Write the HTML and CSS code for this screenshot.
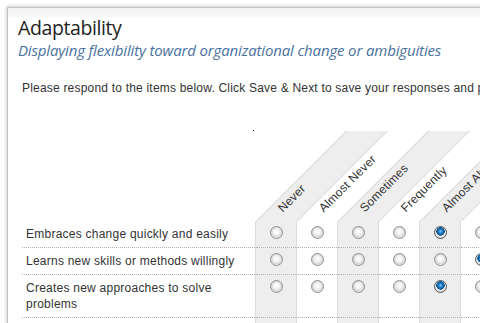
FILE: index.html
```html
<!DOCTYPE html>
<html>
<head>
<meta charset="utf-8">
<link rel="stylesheet" href="styles.css">
</head>
<body>
<div class="card">
  <div class="head">
    <h1 class="title">Adaptability</h1>
    <p class="sub">Displaying flexibility toward organizational change or ambiguities</p>
  </div>
  <div class="content">
    <p class="intro">Please respond to the items below. Click Save &amp; Next to save your responses and proceed to the next page.</p>
    <table class="grid">
      <thead>
        <tr>
          <th class="lblhead"><span class="dot"></span></th>
          <th class="colhead alt"><div class="band"></div><span class="clabel">Never</span></th>
          <th class="colhead"><div class="band"></div><span class="clabel">Almost Never</span></th>
          <th class="colhead alt"><div class="band"></div><span class="clabel">Sometimes</span></th>
          <th class="colhead"><div class="band"></div><span class="clabel">Frequently</span></th>
          <th class="colhead alt"><div class="band"></div><span class="clabel">Almost Always</span></th>
          <th class="colhead"><div class="band"></div><span class="clabel">Always</span></th>
        </tr>
      </thead>
      <tbody>
        <tr>
          <td class="q">Embraces change quickly and easily</td>
          <td class="opt alt"><span class="radio"></span></td>
          <td class="opt"><span class="radio"></span></td>
          <td class="opt alt"><span class="radio"></span></td>
          <td class="opt"><span class="radio"></span></td>
          <td class="opt alt"><span class="radio on"></span></td>
          <td class="opt"><span class="radio"></span></td>
        </tr>
        <tr>
          <td class="q">Learns new skills or methods willingly</td>
          <td class="opt alt"><span class="radio"></span></td>
          <td class="opt"><span class="radio"></span></td>
          <td class="opt alt"><span class="radio"></span></td>
          <td class="opt"><span class="radio"></span></td>
          <td class="opt alt"><span class="radio"></span></td>
          <td class="opt"><span class="radio on"></span></td>
        </tr>
        <tr>
          <td class="q">Creates new approaches to solve problems</td>
          <td class="opt alt"><span class="radio"></span></td>
          <td class="opt"><span class="radio"></span></td>
          <td class="opt alt"><span class="radio"></span></td>
          <td class="opt"><span class="radio"></span></td>
          <td class="opt alt"><span class="radio on"></span></td>
          <td class="opt"><span class="radio"></span></td>
        </tr>
        <tr>
          <td class="q">&nbsp;</td>
          <td class="opt alt"></td>
          <td class="opt"></td>
          <td class="opt alt"></td>
          <td class="opt"></td>
          <td class="opt alt"></td>
          <td class="opt"></td>
        </tr>
      </tbody>
    </table>
  </div>
</div>
</body>
</html>
```
FILE: styles.css
```css
html, body {
  margin: 0;
  padding: 0;
  background: #ffffff;
  overflow: hidden;
}
body {
  width: 480px;
  height: 323px;
}
.card {
  margin: 7px 0 0 7px;
  width: 700px;
  height: 400px;
  background: #ffffff;
  border: 1px solid #c4c4c4;
  box-shadow: 0 0 4px rgba(0, 0, 0, 0.28);
}
.head {
  padding: 8px 0 0 10px;
  background: linear-gradient(#f4f4f4 0px, #f7f7f7 8px, #ffffff 10px);
}
.title {
  margin: 0;
  font-family: "Open Sans", "Noto Sans", sans-serif;
  font-weight: normal;
  font-size: 19.5px;
  letter-spacing: -0.4px;
  line-height: 24px;
  color: #222222;
}
.sub {
  margin: 0;
  font-family: "Open Sans", "Noto Sans", sans-serif;
  font-style: italic;
  font-size: 15px;
  letter-spacing: -0.15px;
  line-height: 20px;
  color: #4a72a0;
}
.content {
  padding: 20px 0 0 14px;
}
.intro {
  margin: 0;
  font-family: "Liberation Sans", Arial, sans-serif;
  font-size: 12px;
  letter-spacing: 0.2px;
  line-height: 16px;
  color: #333333;
  white-space: nowrap;
}
.grid {
  border-collapse: collapse;
  border-spacing: 0;
  font-family: "Liberation Sans", Arial, sans-serif;
  font-size: 12px;
  letter-spacing: 0.24px;
  color: #333333;
}
.lblhead {
  width: 233px;
  height: 125px;
  padding: 0;
  vertical-align: top;
  text-align: left;
}
.dot {
  display: block;
  width: 1px;
  height: 1px;
  background: #000;
  margin: 34px 0 0 231px;
}
.colhead {
  position: relative;
  width: 40px;
  padding: 0;
  vertical-align: bottom;
  font-weight: normal;
}
.band {
  height: 90px;
  box-sizing: border-box;
  border-left: 1px solid #d0d0d0;
  transform: skewX(-45deg);
  transform-origin: bottom left;
}
.colhead:last-child .band {
  border-right: 1px solid #d0d0d0;
}
.colhead.alt .band {
  background: #eeeeee;
}
.clabel {
  position: absolute;
  left: 24px;
  bottom: 4px;
  line-height: 14px;
  white-space: nowrap;
  transform: rotate(-45deg);
  transform-origin: left center;
  color: #333333;
}
.q {
  width: 225px;
  padding: 5px 4px;
  line-height: 16px;
  vertical-align: top;
  border-bottom: 1px dotted #b8b0b4;
}
.opt {
  width: 40px;
  padding: 5px 0 0;
  text-align: center;
  vertical-align: top;
  border-left: 1px solid #dcdcdc;
  border-bottom: 1px dotted #b8b0b4;
}
.opt.alt {
  background: #eeeeee;
}
.radio {
  display: inline-block;
  box-sizing: border-box;
  width: 13px;
  height: 13px;
  border-radius: 50%;
  border: 1px solid #909090;
  background: radial-gradient(circle at 50% 45%, #ffffff 0px, #f2f2f2 3px, #d6d6d6 5px, #ececec 6px);
  vertical-align: top;
}
.radio.on {
  border-color: #5a5a5a;
  background: radial-gradient(circle at 50% 40%, #7fc3f0 0px, #1e7fc7 2px, #0b4f8a 4px, #f2f2f2 4.5px, #d8d8d8 6px);
}
```
